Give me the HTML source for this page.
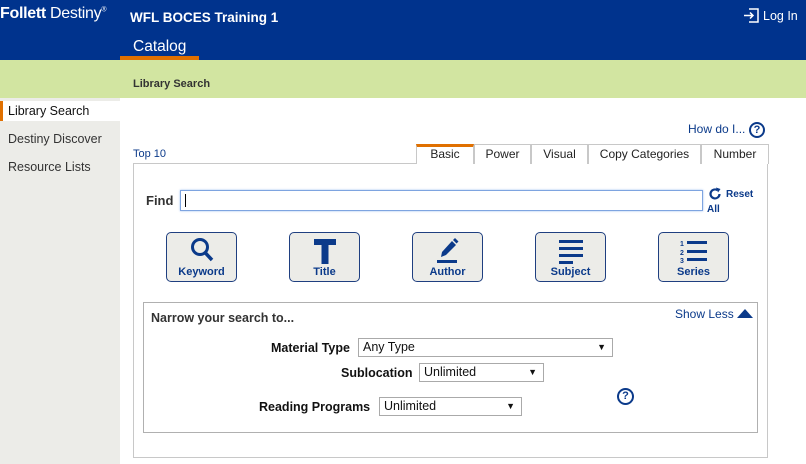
<!DOCTYPE html>
<html><head><style>
*{margin:0;padding:0;box-sizing:border-box}
body{width:806px;height:464px;overflow:hidden;background:#fff;font-family:"Liberation Sans",Arial,sans-serif;position:relative}
.a{position:absolute}
.hdr{left:0;top:0;width:806px;height:60px;background:#00338d}
.grn{left:0;top:60px;width:806px;height:38px;background:#d2e5a1}
.side{left:0;top:98px;width:120px;height:366px;background:#ecece8}
.si{left:8px;font-size:12.5px;color:#333}
.tab{top:144px;height:20px;border:1px solid #c8c8c8;border-bottom:none;font-size:12px;color:#222;text-align:center;line-height:18px;background:#fff}
.btn{top:232px;width:71px;height:50px;border:1px solid #1f3f80;border-radius:5px;background:#ecece8;text-align:center;font-size:11px;font-weight:bold;color:#0b3a8a}
.btn svg{display:block;margin:4px auto 0}
.btn span{position:absolute;left:0;right:0;bottom:3px}
.sel{height:19px;border:1px solid #aaa;font-size:12.5px;color:#111;padding-left:4px;line-height:17px;background:#fff}
.sel b{position:absolute;right:6px;top:0;font-size:9px}
.lbl{font-size:12.5px;font-weight:bold;color:#111}
</style></head><body>
<div class="a hdr"></div>
<div class="a" style="left:0;top:5px;color:#fff;font-size:16px;letter-spacing:-0.3px"><b>Follett</b> Destiny<sup style="font-size:7px">®</sup></div>
<div class="a" style="left:130px;top:10px;color:#fff;font-size:13.5px;font-weight:bold">WFL BOCES Training 1</div>
<div class="a" style="left:133px;top:38px;color:#fff;font-size:15.5px">Catalog</div>
<div class="a" style="left:120px;top:56px;width:79px;height:4px;background:#e07000"></div>
<svg class="a" style="left:743px;top:8px" width="16" height="15" viewBox="0 0 16 15"><path d="M6 1H15V14H6" fill="none" stroke="#fff" stroke-width="1.5"/><path d="M1 7.5H10M7 4.5L10 7.5 7 10.5" fill="none" stroke="#fff" stroke-width="1.5"/></svg>
<div class="a" style="left:763px;top:9px;color:#fff;font-size:12.5px">Log In</div>
<div class="a grn"></div>
<div class="a" style="left:133px;top:78px;font-size:11px;font-weight:bold;color:#333">Library Search</div>
<div class="a side"></div>
<div class="a" style="left:0;top:101px;width:120px;height:20px;background:#fff;border-left:3px solid #e07000"></div>
<div class="a si" style="top:104px;left:8px;color:#111">Library Search</div>
<div class="a si" style="top:132px">Destiny Discover</div>
<div class="a si" style="top:160px">Resource Lists</div>
<div class="a" style="left:688px;top:122px;font-size:12px;color:#0b3a8a">How do I...</div>
<div class="a" style="left:749px;top:122px;width:16px;height:16px;border:2px solid #0b3a8a;border-radius:50%;font-size:11px;font-weight:bold;color:#0b3a8a;text-align:center;line-height:12px">?</div>
<div class="a" style="left:133px;top:148px;font-size:11px;color:#0b3a8a">Top 10</div>
<div class="a" style="left:133px;top:163px;width:635px;height:295px;border:1px solid #c8c8c8"></div>
<div class="a tab" style="left:416px;width:58px;border-top:3px solid #e07000;line-height:15px">Basic</div>
<div class="a tab" style="left:474px;width:57px">Power</div>
<div class="a tab" style="left:531px;width:57px">Visual</div>
<div class="a tab" style="left:588px;width:113px">Copy Categories</div>
<div class="a tab" style="left:701px;width:68px">Number</div>
<div class="a" style="left:146px;top:193px;font-size:13px;font-weight:bold;color:#333">Find</div>
<div class="a" style="left:180px;top:190px;width:523px;height:21px;border:1px solid #7ea4e0;box-shadow:0 0 2px #9bbcf0"><div style="position:absolute;left:4px;top:3px;width:1px;height:13px;background:#000"></div></div>
<svg class="a" style="left:708px;top:187px" width="14" height="14" viewBox="0 0 14 14"><path d="M11.5 7A4.5 4.5 0 1 1 9.5 3.2" fill="none" stroke="#0b3a8a" stroke-width="2.2"/><path d="M8 0.5L12.5 2 10 5.5Z" fill="#0b3a8a"/></svg>
<div class="a" style="left:726px;top:189px;font-size:10px;font-weight:bold;color:#0b3a8a">Reset</div>
<div class="a" style="left:707px;top:204px;font-size:10px;font-weight:bold;color:#0b3a8a">All</div>
<div class="a btn" style="left:166px"><svg width="26" height="28" viewBox="0 0 26 28"><circle cx="11" cy="10" r="7.5" fill="none" stroke="#0b3a8a" stroke-width="3"/><path d="M16 15.5L23 23" stroke="#0b3a8a" stroke-width="3.5"/></svg><span>Keyword</span></div>
<div class="a btn" style="left:289px"><svg width="26" height="28" viewBox="0 0 26 28"><path d="M2 2H24V8H16.5V27H9.5V8H2Z" fill="#0b3a8a"/></svg><span>Title</span></div>
<div class="a btn" style="left:412px"><svg width="26" height="28" viewBox="0 0 26 28"><path d="M6 20L7 15 17 4 21 8 11 18Z" fill="#0b3a8a"/><path d="M18 3L20 1 23.5 4.5 21.5 6.5Z" fill="#0b3a8a"/><rect x="2" y="23" width="20" height="3" fill="#0b3a8a"/></svg><span>Author</span></div>
<div class="a btn" style="left:535px"><svg width="26" height="28" viewBox="0 0 26 28"><rect x="1" y="3" width="24" height="3" fill="#0b3a8a"/><rect x="1" y="10" width="24" height="3" fill="#0b3a8a"/><rect x="1" y="17" width="24" height="3" fill="#0b3a8a"/><rect x="1" y="24" width="14" height="3" fill="#0b3a8a"/></svg><span>Subject</span></div>
<div class="a btn" style="left:658px"><svg width="28" height="28" viewBox="0 0 28 28"><text x="0" y="9" font-size="7" font-weight="bold" fill="#0b3a8a" font-family="Liberation Sans">1</text><text x="0" y="18" font-size="7" font-weight="bold" fill="#0b3a8a" font-family="Liberation Sans">2</text><text x="0" y="26" font-size="7" font-weight="bold" fill="#0b3a8a" font-family="Liberation Sans">3</text><rect x="7" y="4" width="20" height="3" fill="#0b3a8a"/><rect x="7" y="13" width="20" height="3" fill="#0b3a8a"/><rect x="7" y="21" width="20" height="3" fill="#0b3a8a"/></svg><span>Series</span></div>
<div class="a" style="left:143px;top:302px;width:615px;height:131px;border:1px solid #b0b0b0"></div>
<div class="a" style="left:151px;top:311px;font-size:12.5px;font-weight:bold;color:#333">Narrow your search to...</div>
<div class="a" style="left:675px;top:307px;font-size:12px;color:#0b3a8a">Show Less</div>
<svg class="a" style="left:737px;top:308px" width="16" height="10"><path d="M0 10L8 1 16 10Z" fill="#0b3a8a"/></svg>
<div class="a lbl" style="left:271px;top:341px">Material Type</div>
<div class="a sel" style="left:358px;top:338px;width:255px">Any Type<b>▼</b></div>
<div class="a lbl" style="left:341px;top:366px">Sublocation</div>
<div class="a sel" style="left:419px;top:363px;width:125px">Unlimited<b>▼</b></div>
<div class="a lbl" style="left:259px;top:400px">Reading Programs</div>
<div class="a sel" style="left:379px;top:397px;width:143px">Unlimited<b>▼</b></div>
<div class="a" style="left:617px;top:388px;width:17px;height:17px;border:2px solid #0b3a8a;border-radius:50%;font-size:11px;font-weight:bold;color:#0b3a8a;text-align:center;line-height:13px">?</div>
</body></html>
